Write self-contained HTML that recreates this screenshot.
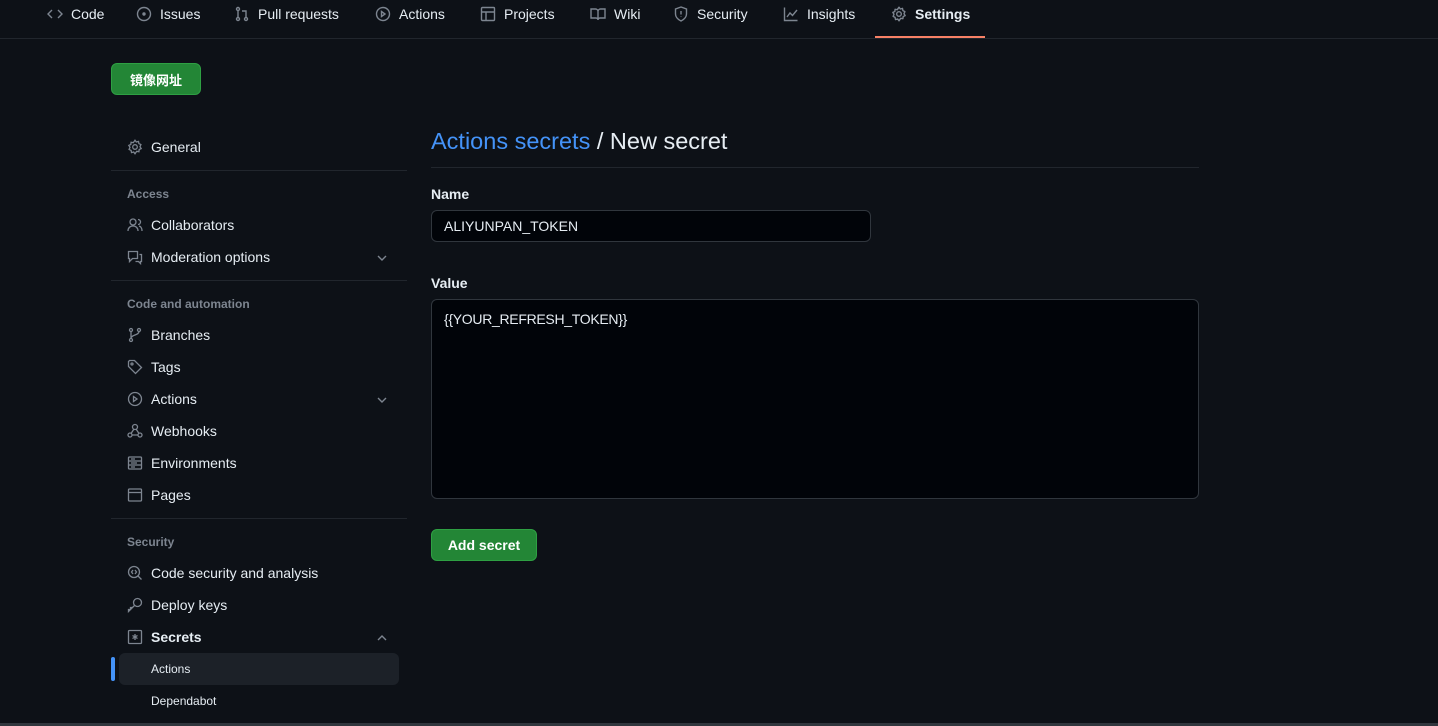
<!DOCTYPE html>
<html><head><meta charset="utf-8"><style>
*{box-sizing:border-box;margin:0;padding:0}
body{width:1438px;height:726px;overflow:hidden;background:#0d1117;color:#e6edf3;font-family:"Liberation Sans","Noto Sans CJK SC",sans-serif;font-size:14px;position:relative}
.nav{position:absolute;left:0;top:0;width:1438px;height:39px;border-bottom:1px solid #21262d}
.tab{position:absolute;top:-1px;height:29px;display:flex;align-items:center;gap:8px;color:#e6edf3;font-size:14px}
.tab svg{width:16px;height:16px;fill:none;stroke:#7d8590;stroke-width:1.4}
.sel{position:absolute;left:875px;top:36px;width:110px;height:2px;background:#f78166}
.btn{position:absolute;background:#238636;border:1px solid #2ea043;border-radius:6px;color:#fff;font-weight:bold;display:flex;align-items:center;justify-content:center}
.item{position:absolute;left:127px;display:flex;align-items:center;gap:8px;font-size:14px;color:#e6edf3}
.item svg{width:16px;height:16px;fill:none;stroke:#7d8590;stroke-width:1.3}
.hd{position:absolute;left:127px;font-size:12px;font-weight:bold;color:#7d8590}
.hr{position:absolute;left:111px;width:296px;height:1px;background:#21262d}
.chev{position:absolute;left:376px;width:12px;height:12px}
.lbl{position:absolute;left:431px;font-weight:bold;font-size:14px}
.inp{position:absolute;left:431px;background:#010409;border:1px solid #30363d;border-radius:6px;padding-left:12px;font-size:14px;color:#e6edf3}
</style></head><body>
<div class="nav">
<div class="tab" style="left:47px"><svg viewBox="0 0 16 16"><path d="M5 4 1 8l4 4M11 4l4 4-4 4"/></svg>Code</div>
<div class="tab" style="left:136px"><svg viewBox="0 0 16 16"><circle cx="8" cy="8" r="6.5"/><circle cx="8" cy="8" r="1" fill="#7d8590"/></svg>Issues</div>
<div class="tab" style="left:234px"><svg viewBox="0 0 16 16"><circle cx="4" cy="3" r="1.5"/><circle cx="4" cy="13" r="1.5"/><circle cx="12" cy="13" r="1.5"/><path d="M4 4.5v7M12 11.5V5H8"/></svg>Pull requests</div>
<div class="tab" style="left:375px"><svg viewBox="0 0 16 16"><circle cx="8" cy="8" r="6.5"/><path d="M6.5 5.5 10 8l-3.5 2.5z"/></svg>Actions</div>
<div class="tab" style="left:480px"><svg viewBox="0 0 16 16"><rect x="1.5" y="1.5" width="13" height="13" rx="1"/><path d="M1.5 6h13M6 6v8.5"/></svg>Projects</div>
<div class="tab" style="left:590px"><svg viewBox="0 0 16 16"><path d="M1 3h4.5A2.5 2.5 0 0 1 8 5.5V14a2 2 0 0 0-2-2H1zM15 3h-4.5A2.5 2.5 0 0 0 8 5.5V14a2 2 0 0 1 2-2h5z"/></svg>Wiki</div>
<div class="tab" style="left:673px"><svg viewBox="0 0 16 16"><path d="M8 1 2.5 3v5c0 3 2.5 5.5 5.5 7 3-1.5 5.5-4 5.5-7V3z M8 5v3.5M8 10.5v.5"/></svg>Security</div>
<div class="tab" style="left:783px"><svg viewBox="0 0 16 16"><path d="M1.5 1.5v13h13M4 11l3-4 2.5 2.5L14 4"/></svg>Insights</div>
<div class="tab" style="left:891px;font-weight:bold"><svg viewBox="0 0 16 16"><circle cx="8" cy="8" r="2.3"/><path d="M8 1.2l1.3 1.8 2.2-.6.4 2.2 2 1-.9 2.1 1.2 1.9-2 .9-.3 2.2-2.2-.4L8 14.8l-1.3-1.8-2.2.6-.4-2.2-2-1 .9-2.1-1.2-1.9 2-.9.3-2.2 2.2.4z" stroke-linejoin="round"/></svg>Settings</div>
<div class="sel"></div>
</div>
<div class="btn" style="left:111px;top:63px;width:90px;height:32px;font-size:13px">镜像网址</div>

<div class="item" style="top:139px"><svg viewBox="0 0 16 16"><circle cx="8" cy="8" r="2.3"/><path d="M8 1.2l1.3 1.8 2.2-.6.4 2.2 2 1-.9 2.1 1.2 1.9-2 .9-.3 2.2-2.2-.4L8 14.8l-1.3-1.8-2.2.6-.4-2.2-2-1 .9-2.1-1.2-1.9 2-.9.3-2.2 2.2.4z"/></svg>General</div>
<div class="hr" style="top:170px"></div>
<div class="hd" style="top:187px">Access</div>
<div class="item" style="top:217px"><svg viewBox="0 0 16 16"><circle cx="6" cy="5" r="3"/><path d="M1 14c0-3 2-5 5-5s5 2 5 5M11 2.5a2.5 2.5 0 0 1 0 5M12 9c2 .5 3 2.5 3 5"/></svg>Collaborators</div>
<div class="item" style="top:249px"><svg viewBox="0 0 16 16"><path d="M1.5 2.5h9v7h-5l-3 3v-3h-1zM12.5 5.5h2v7h-1v2l-2-2h-3"/></svg>Moderation options</div>
<svg class="chev" style="top:252px" viewBox="0 0 12 12" fill="none" stroke="#7d8590" stroke-width="1.4"><path d="M2 4l4 4 4-4"/></svg>
<div class="hr" style="top:280px"></div>
<div class="hd" style="top:297px">Code and automation</div>
<div class="item" style="top:327px"><svg viewBox="0 0 16 16"><circle cx="4" cy="3" r="1.5"/><circle cx="4" cy="13" r="1.5"/><circle cx="12" cy="3" r="1.5"/><path d="M4 4.5v7M12 4.5c0 4-8 3-8 7"/></svg>Branches</div>
<div class="item" style="top:359px"><svg viewBox="0 0 16 16"><path d="M1.5 2.5v5l7 7 6-6-7-7h-5z"/><circle cx="5" cy="5" r="1"/></svg>Tags</div>
<div class="item" style="top:391px"><svg viewBox="0 0 16 16"><circle cx="8" cy="8" r="6.5"/><path d="M6.5 5.5 10 8l-3.5 2.5z"/></svg>Actions</div>
<svg class="chev" style="top:394px" viewBox="0 0 12 12" fill="none" stroke="#7d8590" stroke-width="1.4"><path d="M2 4l4 4 4-4"/></svg>
<div class="item" style="top:423px"><svg viewBox="0 0 16 16"><circle cx="8" cy="4" r="2.5"/><circle cx="3" cy="12" r="2"/><circle cx="13" cy="12" r="2"/><path d="M7 6 4 10.5M5 12h6M9 6l3 4.5"/></svg>Webhooks</div>
<div class="item" style="top:455px"><svg viewBox="0 0 16 16"><rect x="1.5" y="2" width="13" height="12" rx="1"/><path d="M1.5 6h13M1.5 10h13M4 4h4M4 8h6M4 12h4"/></svg>Environments</div>
<div class="item" style="top:487px"><svg viewBox="0 0 16 16"><rect x="1.5" y="2" width="13" height="12" rx="1"/><path d="M1.5 5.5h13"/></svg>Pages</div>
<div class="hr" style="top:518px"></div>
<div class="hd" style="top:535px">Security</div>
<div class="item" style="top:565px"><svg viewBox="0 0 16 16"><circle cx="7" cy="7" r="5.5"/><path d="M11 11l3.5 3.5M6 5 4.5 7 6 9M8 5l1.5 2L8 9"/></svg>Code security and analysis</div>
<div class="item" style="top:597px"><svg viewBox="0 0 16 16"><circle cx="10.5" cy="5.5" r="4"/><path d="M7.5 8.5 1.5 14.5v-2h2v-2h2"/></svg>Deploy keys</div>
<div class="item" style="top:629px;font-weight:bold"><svg viewBox="0 0 16 16"><rect x="1.5" y="1.5" width="13" height="13" rx="1"/><path d="M8 5v6M5.5 6.5l5 3M10.5 6.5l-5 3"/></svg>Secrets</div>
<svg class="chev" style="top:632px" viewBox="0 0 12 12" fill="none" stroke="#7d8590" stroke-width="1.4"><path d="M2 8l4-4 4 4"/></svg>
<div style="position:absolute;left:119px;top:653px;width:280px;height:32px;background:#1c2128;border-radius:6px"></div>
<div style="position:absolute;left:111px;top:657px;width:4px;height:24px;background:#4493f8;border-radius:2px"></div>
<div style="position:absolute;left:151px;top:662px;font-size:12px">Actions</div>
<div style="position:absolute;left:151px;top:694px;font-size:12px">Dependabot</div>

<div style="position:absolute;left:431px;top:128px;font-size:23.5px"><span style="color:#4493f8">Actions secrets</span> / New secret</div>
<div style="position:absolute;left:431px;top:167px;width:768px;height:1px;background:#21262d"></div>
<div class="lbl" style="top:186px">Name</div>
<div class="inp" style="top:210px;width:440px;height:32px;line-height:30px">ALIYUNPAN_TOKEN</div>
<div class="lbl" style="top:275px">Value</div>
<div class="inp" style="top:299px;width:768px;height:200px;padding-top:11px;letter-spacing:-0.3px">{{YOUR_REFRESH_TOKEN}}</div>
<div class="btn" style="left:431px;top:529px;width:106px;height:32px;font-size:14px">Add secret</div>
<div style="position:absolute;left:0;top:723px;width:1438px;height:3px;background:#30363d"></div>
</body></html>
